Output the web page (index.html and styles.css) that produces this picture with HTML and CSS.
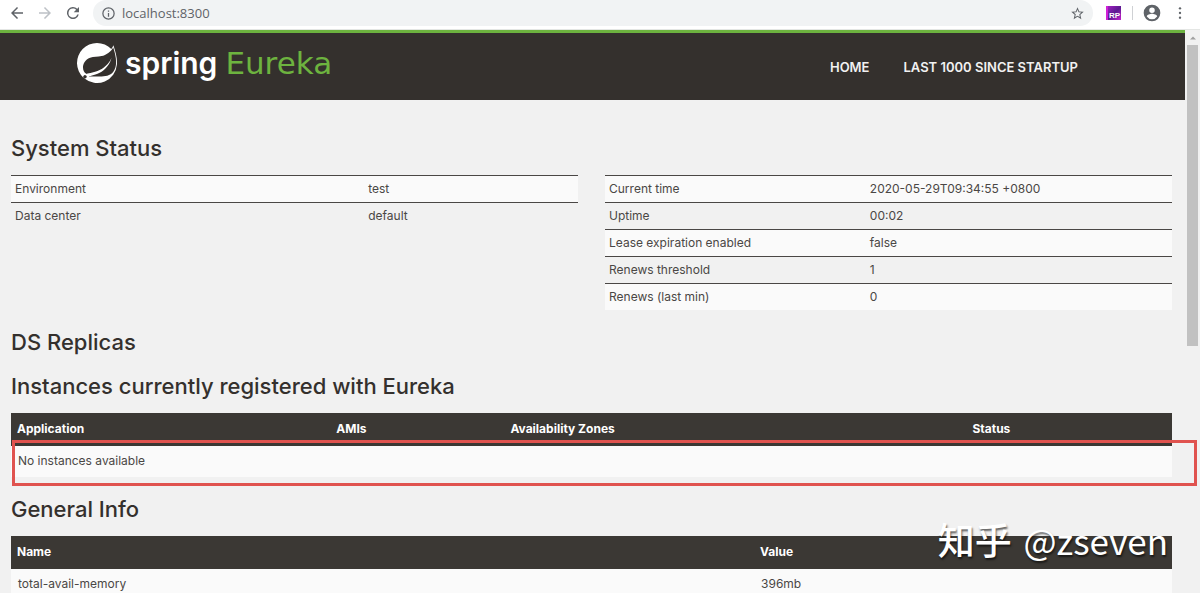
FILE: index.html
```html
<!DOCTYPE html>
<html lang="en">
<head>
<meta charset="utf-8">
<title>Eureka</title>
<link rel="stylesheet" href="styles.css">
</head>

<body>
<div class="toolbar">
  <button class="tool" type="button" aria-label="Back">
    <svg viewBox="0 0 24 24"><path d="M20 11H7.8l5.6-5.6L12 4l-8 8 8 8 1.4-1.4L7.8 13H20z"/></svg>
  </button>
  <button class="tool tool-off" type="button" aria-label="Forward">
    <svg viewBox="0 0 24 24"><path d="M12 4l-1.4 1.4 5.6 5.6H4v2h12.2l-5.6 5.6L12 20l8-8z"/></svg>
  </button>
  <button class="tool" type="button" aria-label="Reload">
    <svg viewBox="0 0 24 24"><path d="M17.65 6.35A8 8 0 1 0 19.73 14h-2.08A6 6 0 1 1 12 6c1.66 0 3.14.69 4.22 1.78L13 11h7V4z"/></svg>
  </button>
  <div class="omnibox">
    <svg class="info" viewBox="0 0 24 24"><path d="M11 7h2v2h-2zm0 4h2v6h-2zm1-9a10 10 0 1 0 0 20 10 10 0 0 0 0-20zm0 18a8 8 0 1 1 0-16 8 8 0 0 1 0 16z"/></svg>
    <input class="url" type="text" value="localhost:8300" aria-label="Address">
    <button class="tool" type="button" aria-label="Bookmark">
      <svg class="star" viewBox="0 0 24 24"><path d="M22 9.24l-7.19-.62L12 2 9.19 8.63 2 9.24l5.46 4.73L5.82 21 12 17.27 18.18 21l-1.63-7.03zM12 15.4l-3.76 2.27 1-4.28-3.32-2.88 4.38-.38L12 6.1l1.71 4.04 4.38.38-3.32 2.88 1 4.28z"/></svg>
    </button>
  </div>
  <button class="tool" type="button" aria-label="RP extension">
    <span class="ext">RP</span>
  </button>
  <span class="divider"></span>
  <button class="tool" type="button" aria-label="Profile">
    <svg class="avatar" viewBox="0 0 24 24"><path d="M12 2a10 10 0 1 0 0 20 10 10 0 0 0 0-20zm0 3.500a3.300 3.300 0 1 1 0 6.600 3.300 3.300 0 0 1 0-6.600zm0 14a7.500 7.500 0 0 1-6.200-3.300c.1-2.100 4.100-3.200 6.200-3.200s6.100 1.100 6.200 3.200A7.500 7.500 0 0 1 12 19.500z"/></svg>
  </button>
  <button class="tool" type="button" aria-label="Menu">
    <svg class="dots" viewBox="0 0 24 24"><circle cx="12" cy="4" r="2"/><circle cx="12" cy="12" r="2"/><circle cx="12" cy="20" r="2"/></svg>
  </button>
</div>

<div class="window">
  <div class="page">
    <header class="navbar">
      <a class="brand" href="#">
        <svg class="leaf" viewBox="0 0 24 24"><path d="M21.8537 1.4158a10.4504 10.4504 0 0 1-1.284 2.2471A11.9666 11.9666 0 1 0 3.8518 20.7757l.4445.3951a11.9543 11.9543 0 0 0 19.6316-8.2971c.3457-3.0126-.568-6.8649-2.0742-11.458zM5.5805 20.8745a1.0174 1.0174 0 1 1-.1482-1.4323 1.0396 1.0396 0 0 1 .1482 1.4323zm16.1991-3.5806c-2.9385 3.9263-9.2601 2.5928-13.2852 2.7904 0 0-.7161.0494-1.4323.1481 0 0 .2717-.1234.6174-.2469 2.8398-.9877 4.1732-1.1853 5.9018-2.0743 3.2349-1.6545 6.4698-5.2844 7.1118-9.0379-1.2347 3.6053-4.9881 6.7167-8.3959 7.9761-2.3459.8643-6.5685 1.7039-6.5685 1.7039l-.1729-.0988c-2.8645-1.4076-2.9632-7.6304 2.2718-9.6306 2.2966-.889 4.4696-.395 6.9637-.9877 2.6422-.6174 5.7043-2.5929 6.939-5.1857 1.3828 4.1732 3.062 10.643.0493 14.6434z"/></svg>
        <span class="brand-spring">spring</span>
        <span class="brand-eureka">Eureka</span>
      </a>
      <nav class="links">
        <a href="#">HOME</a>
        <a href="#">LAST 1000 SINCE STARTUP</a>
      </nav>
    </header>

    <main class="content">
      <h2>System Status</h2>
      <div class="status">
        <table class="facts facts-left">
          <tr><td>Environment</td><td>test</td></tr>
          <tr><td>Data center</td><td>default</td></tr>
        </table>
        <table class="facts facts-right">
          <tr><td>Current time</td><td>2020-05-29T09:34:55 +0800</td></tr>
          <tr><td>Uptime</td><td>00:02</td></tr>
          <tr><td>Lease expiration enabled</td><td>false</td></tr>
          <tr><td>Renews threshold</td><td>1</td></tr>
          <tr><td>Renews (last min)</td><td>0</td></tr>
        </table>
      </div>

      <h2>DS Replicas</h2>

      <h2>Instances currently registered with Eureka</h2>
      <div class="marked">
        <table class="grid instances">
          <thead>
            <tr><th>Application</th><th>AMIs</th><th>Availability Zones</th><th>Status</th></tr>
          </thead>
          <tbody>
            <tr><td colspan="4">No instances available</td></tr>
          </tbody>
        </table>
        <div class="marker"></div>
      </div>

      <h2>General Info</h2>
      <table class="grid general">
        <thead>
          <tr><th>Name</th><th>Value</th></tr>
        </thead>
        <tbody>
          <tr><td>total-avail-memory</td><td>396mb</td></tr>
        </tbody>
      </table>
    </main>
  </div>
  <div class="scrollbar">
    <svg class="scroll-up" viewBox="0 0 8 4"><path d="M0 4l4-4 4 4z"/></svg>
    <div class="thumb"></div>
  </div>
</div>

<div class="watermark"><span class="site">知乎</span> @zseven</div>
</body>
</html>
```

FILE: styles.css
```css
* {
  box-sizing: border-box;
}

body {
  margin: 0;
  height: 100vh;
  display: flex;
  flex-direction: column;
  position: relative;
  overflow: hidden;
  background: #f1f1f1;
  color: #34302d;
  font-family: Inter, "Liberation Sans", sans-serif;
  font-size: 12px;
}

a {
  color: inherit;
  text-decoration: none;
}

/* browser bar */
.toolbar {
  display: flex;
  align-items: center;
  flex: none;
  height: 30px;
  padding: 0 6px 3px 3px;
  background: #fff;
  border-bottom: 1px solid #e4e6e4;
}

.tool {
  display: flex;
  align-items: center;
  justify-content: center;
  flex: none;
  width: 28px;
  height: 26px;
  padding: 0;
  border: 0;
  background: none;
}

.tool svg {
  width: 18px;
  height: 18px;
  fill: #5f6368;
}

.tool-off svg {
  fill: #bdc1c6;
}

.omnibox {
  display: flex;
  align-items: center;
  flex: 1;
  height: 26px;
  margin: 0 6px;
  padding: 0 2px 0 8px;
  border-radius: 13px;
  background: #f1f3f4;
}

.info {
  width: 15px;
  height: 15px;
  fill: #5f6368;
}

.url {
  flex: 1;
  margin: 0;
  padding: 0 6px;
  border: 0;
  background: none;
  color: #5f6368;
  font-family: "Open Sans", sans-serif;
  font-size: 13px;
}

.tool .star {
  width: 15px;
  height: 15px;
}

.tool .avatar {
  width: 20px;
  height: 20px;
}

.tool .dots {
  width: 14px;
  height: 14px;
}

.ext {
  width: 15px;
  height: 14px;
  padding: 5px 0 0 1px;
  border-left: 2px solid #d020d8;
  background: linear-gradient(135deg, #a01fc0, #5b1a90 50%, #c81fd0);
  color: #fff;
  font: bold 8px/9px "Liberation Sans", sans-serif;
}

.divider {
  width: 1px;
  height: 14px;
  margin: 0 5px;
  background: #cfd1d4;
}

/* page and its scrollbar */
.window {
  display: flex;
  flex: 1;
  min-height: 0;
}

.page {
  flex: 1;
}

.scrollbar {
  display: flex;
  flex-direction: column;
  align-items: center;
  gap: 5px;
  width: 15px;
  padding-top: 6px;
  background: #f1f1f1;
}

.scroll-up {
  width: 6px;
  height: 4px;
  fill: #a0a0a0;
}

.thumb {
  width: 11px;
  height: 54%;
  background: #c1c1c1;
}

.navbar {
  display: flex;
  align-items: center;
  justify-content: space-between;
  height: 70px;
  padding: 0 107px 0 77px;
  border-top: 3px solid #6db33f;
  background: #34302d;
  color: #f1f1f1;
}

.brand {
  display: flex;
  align-items: center;
  gap: 8px;
  padding-bottom: 8px;
}

.leaf {
  width: 40px;
  height: 40px;
  fill: #fff;
}

.brand-spring {
  color: #fff;
  font-size: 30px;
  font-weight: 600;
}

.brand-eureka {
  color: #6db33f;
  font-family: "DejaVu Sans", sans-serif;
  font-size: 31px;
}

.links {
  display: flex;
  gap: 34px;
  font-size: 13px;
  font-weight: 600;
}

.content {
  padding: 16px 13px 0 11px;
}

h2 {
  margin: 20px 0 15px;
  font-size: 22px;
  font-weight: 500;
  line-height: 24px;
}

table {
  width: 100%;
  border-spacing: 0;
  table-layout: fixed;
}

td {
  color: #4a4745;
}

/* system status */
.status {
  display: grid;
  grid-template-columns: 1fr 1fr;
  align-items: start;
  gap: 27px;
}

.facts td {
  height: 27px;
  padding: 0 4px 1px;
  border-top: 1px solid #4a4745;
}

.facts tr:nth-child(odd) td,
.grid td {
  background: #fafafa;
}

.facts-left td:first-child {
  width: 62.3%;
}

.facts-right td:first-child {
  width: 46%;
}

/* tables with a dark head */
.grid th {
  height: 33px;
  padding: 0 6px 2px;
  background: #3b3834;
  color: #fff;
  font-weight: 700;
  text-align: left;
}

.grid td {
  height: 31px;
  padding: 0 7px 2px;
}

.instances th:nth-child(1) {
  width: 27.5%;
}

.instances th:nth-child(2) {
  width: 15%;
}

.instances th:nth-child(3) {
  width: 39.8%;
}

.general th:first-child {
  width: 64%;
}

/* red frame over the empty row */
.marked {
  position: relative;
}

.marker {
  position: absolute;
  top: 27px;
  right: -25px;
  bottom: -9px;
  left: 1px;
  z-index: 1;
  border: 3px solid #e0534f;
}

.watermark {
  position: absolute;
  right: 32px;
  bottom: 27px;
  color: #fff;
  font-family: "Noto Sans CJK SC", sans-serif;
  font-size: 35px;
  line-height: 52px;
  text-shadow: 1px 2px 2px rgba(0, 0, 0, 0.6);
}

.site {
  margin-right: 4px;
  font-size: 37px;
  font-weight: 500;
}
```
